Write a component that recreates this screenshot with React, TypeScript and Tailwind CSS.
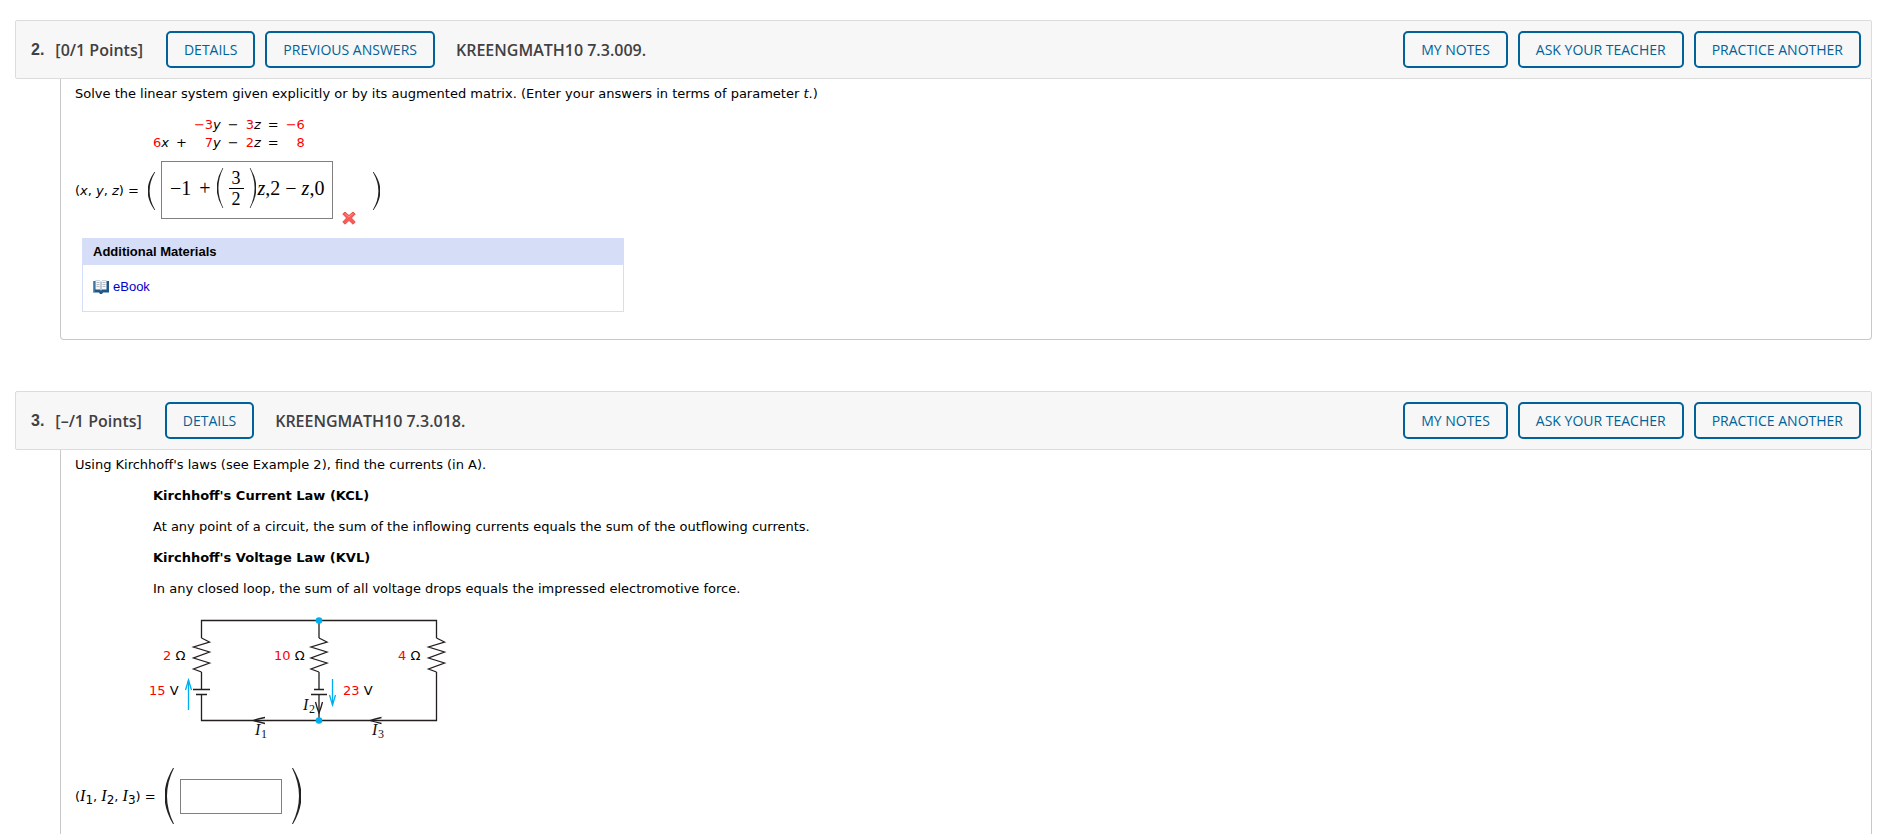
import type { ReactNode } from 'react';

const RESISTOR = [
  [0, 23],
  [8, 27],
  [-8, 32],
  [8, 37],
  [-8, 43],
  [8, 48],
  [-8, 54],
  [0, 57],
];

interface HeaderButtonProps {
  children: ReactNode;
}

function HeaderButton({ children }: HeaderButtonProps) {
  return (
    <button
      type="button"
      className="h-[37px] rounded-[5px] border-2 border-[#006298] px-4 font-['Open_Sans',sans-serif] text-sm font-medium whitespace-nowrap text-[#006298] hover:bg-white"
    >
      {children}
    </button>
  );
}

interface QuestionProps {
  number: string;
  points: string;
  name: string;
  actions: string[];
  last?: boolean;
  children: ReactNode;
}

function Question({ number, points, name, actions, last, children }: QuestionProps) {
  return (
    <section className={last ? 'flex flex-1 flex-col' : ''}>
      <header className="flex h-[59px] items-center justify-between rounded-[2px] border border-[#dcdcdc] bg-[#f7f7f7] pr-[10px] pl-[15px] font-['Open_Sans',sans-serif] text-base text-[#414042]">
        <div className="flex items-center">
          <span className="mr-[11px] font-['Liberation_Sans',sans-serif] font-bold">{number}.</span>
          <h2 className="mr-[23px] font-semibold">{points}</h2>
          <div className="mr-[21px] flex gap-[10px]">
            {actions.map((action) => (
              <HeaderButton key={action}>{action}</HeaderButton>
            ))}
          </div>
          <h2 className="font-semibold">{name}</h2>
        </div>
        <div className="flex gap-[10px]">
          <HeaderButton>MY NOTES</HeaderButton>
          <HeaderButton>ASK YOUR TEACHER</HeaderButton>
          <HeaderButton>PRACTICE ANOTHER</HeaderButton>
        </div>
      </header>
      <div
        className={
          last
            ? 'ml-[45px] flex-1 border-x border-[#c8c8c8] px-[14px] pt-[7px]'
            : 'ml-[45px] rounded-b-[4px] border-x border-b border-[#c8c8c8] px-[14px] pt-[7px] pb-[27px]'
        }
      >
        {children}
      </div>
    </section>
  );
}

function Red({ children }: { children: ReactNode }) {
  return <span className="text-[#ff0000]">{children}</span>;
}

function LinearSystem() {
  return (
    <table className="mt-[14px] ml-[78px] text-right leading-[18px]">
      <tbody>
        <tr>
          <td></td>
          <td></td>
          <td><Red>−3</Red><i>y</i></td>
          <td className="px-[7px]">−</td>
          <td><Red>3</Red><i>z</i></td>
          <td className="px-[7px]">=</td>
          <td><Red>−6</Red></td>
        </tr>
        <tr>
          <td><Red>6</Red><i>x</i></td>
          <td className="px-[7px]">+</td>
          <td><Red>7</Red><i>y</i></td>
          <td className="px-[7px]">−</td>
          <td><Red>2</Red><i>z</i></td>
          <td className="px-[7px]">=</td>
          <td><Red>8</Red></td>
        </tr>
      </tbody>
    </table>
  );
}

// Tall parenthesis drawn as a tapered arc, mirrored for the closing side
function Paren({ className, close }: { className: string; close?: boolean }) {
  return (
    <svg viewBox="0 0 10 40" preserveAspectRatio="none" className={className} aria-hidden="true">
      <path
        d={close ? 'M1 0 Q15 20 1 40 L2 40 Q19 20 2 0 Z' : 'M9 0 Q-5 20 9 40 L8 40 Q-9 20 8 0 Z'}
        fill="#222"
      />
    </svg>
  );
}

function WrongMark() {
  return (
    <svg viewBox="0 0 14 14" className="mb-[2px] ml-[9px] size-[14px] self-end" role="img" aria-label="Incorrect">
      <path
        d="M3 1 L7 4.6 L11 1 L13.2 3 L9.4 7 L13.2 11 L11 13.2 L7 9.4 L3 13.2 L.8 11 L4.6 7 L.8 3 Z"
        fill="#fb5a55"
        stroke="#e2504e"
        strokeWidth="1"
        strokeLinejoin="round"
      />
      <path d="M3 2.6 L6.8 6 L11 2.6" fill="none" stroke="#ff8f8a" strokeWidth="1" />
    </svg>
  );
}

function BookIcon() {
  return (
    <svg viewBox="0 0 16 14" className="h-[14px] w-4" aria-hidden="true">
      <path d="M0 1 H16 V12.5 H10 L9 14 H7 L6 12.5 H0 Z" fill="#1f5788" />
      <path d="M0 1 H1.5 V12 H0 Z" fill="#5f95bd" />
      <path d="M2.5 0 H7 L8 1 L9 0 H13.5 V9.5 H9 L8 10.5 L7 9.5 H2.5 Z" fill="#f5f7fa" />
      <path d="M2.5 .5 H7 M9 .5 H13.5" stroke="#c9d6e2" strokeWidth="1" />
      <path d="M8 1.5 V10.5" stroke="#8b98a5" strokeWidth="1" />
      <path d="M3.5 2.5 H6.5 M3.5 4.5 H6.5 M3.5 6.5 H6.5 M9.5 2.5 H12.5 M9.5 4.5 H12.5 M9.5 6.5 H12.5" stroke="#b4b9bf" strokeWidth="1" />
    </svg>
  );
}

function Resistor({ x }: { x: number }) {
  return <polyline points={RESISTOR.map(([dx, y]) => `${x + dx},${y}`).join(' ')} />;
}

interface LabelProps {
  x: number;
  y: number;
  value: string;
  unit: string;
}

function CircuitLabel({ x, y, value, unit }: LabelProps) {
  return (
    <text x={x} y={y} fontSize="13" fill="#000">
      <tspan fill="#ff0000">{value}</tspan> {unit}
    </text>
  );
}

function CurrentLabel({ x, y, index }: { x: number; y: number; index: number }) {
  return (
    <g className="font-['Liberation_Serif',serif]" fill="#111">
      <text x={x} y={y} fontSize="16" fontStyle="italic">I</text>
      <text x={x + 6} y={y + 3} fontSize="12">{index}</text>
    </g>
  );
}

function Circuit() {
  return (
    <svg viewBox="0 0 300 126" className="mt-[18px] ml-[73px] h-[126px] w-[300px]">
      <g fill="none" stroke="#231f20" strokeWidth="1.3" strokeLinejoin="miter">
        <path d="M53.5 23 V5.5 H288.5 V23 M171 5.5 V23" />
        <Resistor x={53.5} />
        <Resistor x={171} />
        <Resistor x={288.5} />
        <path d="M53.5 57 V74.5 M53.5 79.5 V105.5 H288.5 V57 M171 57 V74.5 M171 79.5 V105.5" />
        <path d="M45 74.5 H62 M48 79.5 H59 M166 74.5 H176 M163 79.5 H179" />
        <path d="M167.5 87 Q169 93 171 98 Q173 93 174.5 87" />
        <path d="M117 102.5 Q110 104 105 105.5 Q110 107 117 108.5 M233.5 102.5 Q227 104 222 105.5 Q227 107 233.5 108.5" />
      </g>
      <g fill="none" stroke="#00aeef" strokeWidth="1.3">
        <path d="M40.5 95 V65 M184.5 64 V90" />
        <path d="M37.5 75 L40.5 65 L43.5 75 M181.5 80 L184.5 90 L187.5 80" />
      </g>
      <circle cx="171" cy="5.5" r="3.3" fill="#00aeef" />
      <circle cx="171" cy="105.5" r="3.3" fill="#00aeef" />
      <CircuitLabel x={15} y={45} value="2" unit="Ω" />
      <CircuitLabel x={126} y={45} value="10" unit="Ω" />
      <CircuitLabel x={250} y={45} value="4" unit="Ω" />
      <CircuitLabel x={1} y={80} value="15" unit="V" />
      <CircuitLabel x={195} y={80} value="23" unit="V" />
      <CurrentLabel x={155} y={95} index={2} />
      <CurrentLabel x={107} y={120} index={1} />
      <CurrentLabel x={224} y={120} index={3} />
    </svg>
  );
}

function Current({ index }: { index: number }) {
  return (
    <>
      <i className="font-['Liberation_Serif',serif] text-base leading-4">I</i>
      <sub className="text-xs">{index}</sub>
    </>
  );
}

export default function App() {
  return (
    <main className="flex min-h-screen flex-col gap-[51px] bg-white pt-5 pr-2 pl-[15px] font-['DejaVu_Sans',sans-serif] text-[13px] leading-4 text-black">
      <Question number="2" points="[0/1 Points]" name="KREENGMATH10 7.3.009." actions={['DETAILS', 'PREVIOUS ANSWERS']}>
        <p>
          Solve the linear system given explicitly or by its augmented matrix. (Enter your answers in terms of parameter <i>t</i>.)
        </p>
        <LinearSystem />
        <div className="mt-[9px] flex h-[66px] items-start">
          <span className="mt-[22px] mr-[9px]">
            (<i>x</i>, <i>y</i>, <i>z</i>) =
          </span>
          <Paren className="mt-[11px] h-[38px] w-2" />
          <div className="ml-[5px] flex h-[58px] items-center border border-[#808080] px-2 pb-1 font-['Liberation_Serif',serif] text-xl leading-5">
            <span>−1</span>
            <span className="ml-2">+</span>
            <Paren className="mr-[3px] ml-[6px] h-[40px] w-[7px]" />
            <span className="mx-[2px] flex flex-col text-center text-lg leading-5">
              <span className="border-b border-black px-[3px]">3</span>
              <span>2</span>
            </span>
            <Paren className="mr-[2px] ml-[3px] h-[40px] w-[7px]" close />
            <span>
              <i>z</i>,2 − <i>z</i>,0
            </span>
          </div>
          <WrongMark />
          <Paren className="mt-[11px] ml-[16px] h-[38px] w-2" close />
        </div>
        <div className="mt-[11px] ml-[7px] w-[542px] max-w-full border border-[#d6ddf7] font-['Liberation_Sans',sans-serif]">
          <h3 className="bg-[#d6ddf7] px-[10px] py-[5px] font-bold">Additional Materials</h3>
          <div className="flex items-center gap-1 px-[10px] pt-[14px] pb-[16px]">
            <BookIcon />
            <a href="#ebook" className="text-[#0000cc]">eBook</a>
          </div>
        </div>
      </Question>

      <Question number="3" points="[–/1 Points]" name="KREENGMATH10 7.3.018." actions={['DETAILS']} last>
        <p>Using Kirchhoff's laws (see Example 2), find the currents (in A).</p>
        <div className="mt-[15px] ml-[78px] flex flex-col gap-[15px]">
          <h3 className="font-bold">Kirchhoff's Current Law (KCL)</h3>
          <p>At any point of a circuit, the sum of the inflowing currents equals the sum of the outflowing currents.</p>
          <h3 className="font-bold">Kirchhoff's Voltage Law (KVL)</h3>
          <p>In any closed loop, the sum of all voltage drops equals the impressed electromotive force.</p>
        </div>
        <Circuit />
        <div className="mt-[27px] flex items-center">
          <label htmlFor="currents" className="mr-[9px]">
            (<Current index={1} />, <Current index={2} />, <Current index={3} />) =
          </label>
          <Paren className="h-[56px] w-[10px]" />
          <input id="currents" type="text" className="ml-[5px] h-[35px] w-[102px] border border-[#808080] px-2" />
          <Paren className="ml-[9px] h-[56px] w-[10px]" close />
        </div>
      </Question>
    </main>
  );
}
